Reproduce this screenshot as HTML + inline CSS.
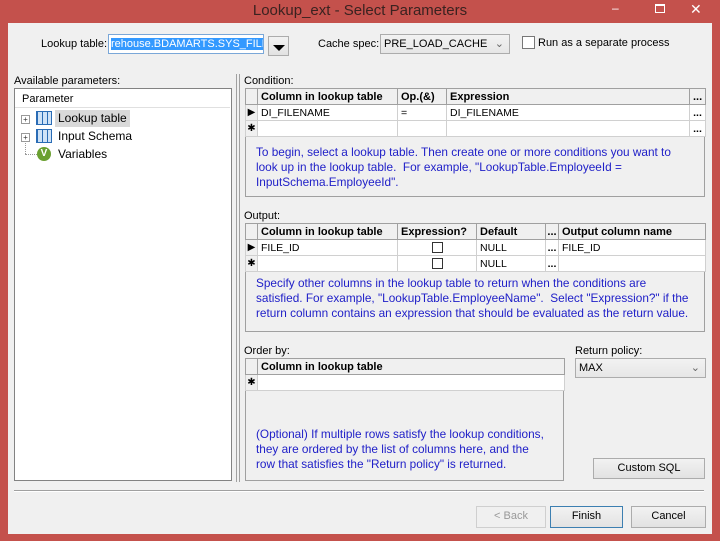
<!DOCTYPE html>
<html><head><meta charset="utf-8"><style>
*{box-sizing:border-box}
body{margin:0;width:720px;height:541px;background:#c4514c;font-family:"Liberation Sans",sans-serif;font-size:11px;color:#000;position:relative;overflow:hidden}
.a{position:absolute}
.client{left:8px;top:23px;width:704px;height:511px;background:#f0f0f0}
.title{left:0;top:0;width:720px;height:22px;text-align:center;font-size:15px;line-height:21px;color:#3a2220}
.box{border:1px solid #a0a0a0;background:#f0f0f0}
.grid{border-collapse:collapse;position:absolute;background:#fff;table-layout:fixed}
.grid td{border:1px solid #d0d0d0;height:16px;padding:0 3px;white-space:nowrap;overflow:hidden;font-size:10.5px}
.grid tr.h td{background:#f0f0f0;font-weight:bold;border-color:#a0a0a0;font-size:11px}
.grid td.rh{background:#f0f0f0;padding:0;text-align:center;font-size:10px}
.blue{color:#2020c8;font-size:11.8px;line-height:15px;white-space:nowrap}
.btn{border:1px solid #acacac;background:linear-gradient(#f2f2f2,#e2e2e2);text-align:center;line-height:19px}
.sel{border:1px solid #acacac;background:linear-gradient(#f2f2f2,#e6e6e6);padding-left:3px;line-height:18px}
.dots{font-weight:bold;text-align:center}
.cb{width:11px;height:11px;border:1px solid #333;background:#fff;display:inline-block;vertical-align:middle}
</style></head><body>
<div class="a title">Lookup_ext - Select Parameters</div>
<div class="a" style="left:612px;top:4px;width:10px;height:10px;color:#fff;font-size:12px;line-height:8px">–</div>
<div class="a" style="left:655px;top:4px;width:10px;height:9px;border:1px solid #fff;border-top-width:2px"></div>
<div class="a" style="left:690px;top:1px;color:#fff;font-size:14px">✕</div>
<div class="a client"></div>

<div class="a" style="left:41px;top:38px">Lookup table:</div>
<div class="a" style="left:108px;top:34px;width:156px;height:20px;border:1px solid #7aa7d8;background:#fff;padding:3px 2px;overflow:hidden;white-space:nowrap"><span style="background:#3399ff;color:#fff;line-height:13px">rehouse.BDAMARTS.SYS_FILE</span></div>
<div class="a btn" style="left:268px;top:36px;width:21px;height:20px"><div style="margin:8px auto 0;width:0;height:0;border-left:6px solid transparent;border-right:6px solid transparent;border-top:6px solid #000"></div></div>
<div class="a" style="left:318px;top:38px">Cache spec:</div>
<div class="a sel" style="left:380px;top:34px;width:130px;height:20px">PRE_LOAD_CACHE<span style="position:absolute;right:5px;color:#666">⌄</span></div>
<div class="a" style="left:522px;top:36px;width:13px;height:13px;border:1px solid #777;background:#fff"></div>
<div class="a" style="left:538px;top:37px">Run as a separate process</div>

<div class="a" style="left:14px;top:75px">Available parameters:</div>
<div class="a" style="left:14px;top:88px;width:218px;height:393px;border:1px solid #828282;background:#fff"></div>
<div class="a" style="left:22px;top:93px">Parameter</div>
<div class="a" style="left:15px;top:107px;width:215px;border-top:1px solid #e0e0e0"></div>
<div class="a" style="left:21px;top:115px;width:9px;height:9px;border:1px solid #999;font-size:8px;line-height:7px;text-align:center;color:#333">+</div>
<div class="a" style="left:21px;top:133px;width:9px;height:9px;border:1px solid #999;font-size:8px;line-height:7px;text-align:center;color:#333">+</div>
<div class="a" style="left:25px;top:143px;height:11px;border-left:1px dotted #999"></div>
<div class="a" style="left:25px;top:154px;width:12px;border-top:1px dotted #999"></div>
<div class="a" style="left:36px;top:111px;width:16px;height:14px;border:1px solid #2a6cb5;background:repeating-linear-gradient(90deg,#2a6cb5 0 1px,#cfe3f7 1px 5px),#cfe3f7"></div>
<div class="a" style="left:36px;top:129px;width:16px;height:14px;border:1px solid #2a6cb5;background:repeating-linear-gradient(90deg,#2a6cb5 0 1px,#cfe3f7 1px 5px),#cfe3f7"></div>
<div class="a" style="left:37px;top:147px;width:14px;height:14px;border-radius:50%;background:#6aa030;color:#fff;font-weight:bold;font-size:10px;text-align:center;line-height:14px">V</div>
<div class="a" style="left:55px;top:110px;width:75px;height:17px;background:#d9d9d9"></div>
<div class="a" style="left:58px;top:111px;font-size:12px">Lookup table</div>
<div class="a" style="left:58px;top:129px;font-size:12px">Input Schema</div>
<div class="a" style="left:58px;top:147px;font-size:12px">Variables</div>

<div class="a" style="left:236px;top:74px;width:4px;height:408px;border-left:1px solid #a0a0a0;border-right:1px solid #a0a0a0"></div>

<div class="a" style="left:244px;top:75px">Condition:</div>
<div class="a box" style="left:245px;top:88px;width:460px;height:109px"></div>
<table class="grid" style="left:245px;top:88px;width:460px">
<colgroup><col style="width:12px"><col style="width:140px"><col style="width:49px"><col style="width:243px"><col style="width:16px"></colgroup>
<tr class="h"><td class="rh"></td><td>Column in lookup table</td><td>Op.(&amp;)</td><td>Expression</td><td class="dots">...</td></tr>
<tr><td class="rh">▶</td><td>DI_FILENAME</td><td>=</td><td>DI_FILENAME</td><td class="dots">...</td></tr>
<tr><td class="rh">✱</td><td></td><td></td><td></td><td class="dots">...</td></tr>
</table>
<div class="a blue" style="left:256px;top:145px">To begin, select a lookup table. Then create one or more conditions you want to<br>look up in the lookup table.&nbsp; For example, "LookupTable.EmployeeId =<br>InputSchema.EmployeeId".</div>

<div class="a" style="left:244px;top:210px">Output:</div>
<div class="a box" style="left:245px;top:223px;width:460px;height:109px"></div>
<table class="grid" style="left:245px;top:223px;width:460px">
<colgroup><col style="width:12px"><col style="width:140px"><col style="width:79px"><col style="width:69px"><col style="width:13px"><col style="width:147px"></colgroup>
<tr class="h"><td class="rh"></td><td>Column in lookup table</td><td>Expression?</td><td>Default</td><td class="dots" style="padding:0">...</td><td>Output column name</td></tr>
<tr><td class="rh">▶</td><td>FILE_ID</td><td style="text-align:center"><span class="cb"></span></td><td>NULL</td><td class="dots" style="padding:0">...</td><td>FILE_ID</td></tr>
<tr><td class="rh">✱</td><td></td><td style="text-align:center"><span class="cb"></span></td><td>NULL</td><td class="dots" style="padding:0">...</td><td></td></tr>
</table>
<div class="a blue" style="left:256px;top:276px">Specify other columns in the lookup table to return when the conditions are<br>satisfied. For example, "LookupTable.EmployeeName".&nbsp; Select "Expression?" if the<br>return column contains an expression that should be evaluated as the return value.</div>

<div class="a" style="left:244px;top:345px">Order by:</div>
<div class="a box" style="left:245px;top:358px;width:319px;height:123px"></div>
<table class="grid" style="left:245px;top:358px;width:319px">
<colgroup><col style="width:12px"><col style="width:307px"></colgroup>
<tr class="h"><td class="rh"></td><td>Column in lookup table</td></tr>
<tr><td class="rh">✱</td><td></td></tr>
</table>
<div class="a blue" style="left:256px;top:427px">(Optional) If multiple rows satisfy the lookup conditions,<br>they are ordered by the list of columns here, and the<br>row that satisfies the "Return policy" is returned.</div>

<div class="a" style="left:575px;top:345px">Return policy:</div>
<div class="a sel" style="left:575px;top:358px;width:131px;height:20px">MAX<span style="position:absolute;right:5px;color:#666">⌄</span></div>
<div class="a btn" style="left:593px;top:458px;width:112px;height:21px">Custom SQL</div>

<div class="a" style="left:14px;top:490px;width:690px;border-top:1px solid #a0a0a0;border-bottom:1px solid #fff"></div>
<div class="a btn" style="left:476px;top:506px;width:70px;height:22px;color:#999;background:#f0f0f0;border-color:#cfcfcf">&lt; Back</div>
<div class="a btn" style="left:550px;top:506px;width:73px;height:22px;border-color:#3c7fb1">Finish</div>
<div class="a btn" style="left:631px;top:506px;width:75px;height:22px">Cancel</div>
</body></html>
